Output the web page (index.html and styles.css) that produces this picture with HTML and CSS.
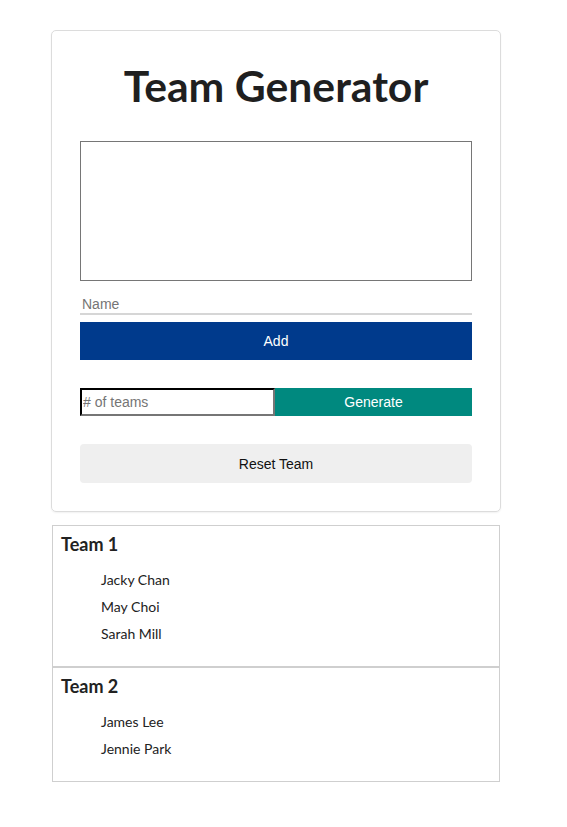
FILE: index.html
```html
<!DOCTYPE html>
<html>
<head>
<meta charset="utf-8">
<link rel="stylesheet" href="styles.css">
</head>
<body>
<div class="wrap">
  <div class="card">
    <h1 class="title">Team Generator</h1>
    <textarea class="names"></textarea>
    <input class="name-input" type="text" placeholder="Name">
    <button class="btn btn-add">Add</button>
    <div class="gen-row">
      <input class="num-input" type="text" placeholder="# of teams">
      <button class="btn btn-gen">Generate</button>
    </div>
    <button class="btn btn-reset">Reset Team</button>
  </div>
  <div class="teams">
    <div class="team">
      <h3 class="team-title">Team 1</h3>
      <ul class="members">
        <li>Jacky Chan</li>
        <li>May Choi</li>
        <li>Sarah Mill</li>
      </ul>
    </div>
    <div class="team">
      <h3 class="team-title">Team 2</h3>
      <ul class="members">
        <li>James Lee</li>
        <li>Jennie Park</li>
      </ul>
    </div>
  </div>
</div>
</body>
</html>
```
FILE: styles.css
```css
html, body {
  margin: 0;
  padding: 0;
  background: #fff;
}
body {
  font-family: Lato, "Liberation Sans", sans-serif;
  color: #222;
}
.wrap {
  width: 450px;
  margin-left: 51px;
  padding-top: 30px;
}
.card {
  border: 1px solid #dcdcdc;
  border-radius: 5px;
  box-shadow: 0 1px 2px rgba(0,0,0,0.06);
  padding: 28px 28px 28px 28px;
  display: flex;
  flex-direction: column;
}
.title {
  margin: 0 0 28px 0;
  font-size: 42.7px;
  font-weight: 700;
  text-align: center;
  color: #1f1f1f;
  line-height: 54px;
}
.names {
  display: block;
  box-sizing: border-box;
  width: 100%;
  height: 140px;
  margin: 0;
  border: 1px solid #767676;
  resize: none;
}
.name-input {
  display: block;
  box-sizing: border-box;
  width: 100%;
  height: 21px;
  margin: 13px 0 0 0;
  padding: 0 2px;
  border: 0;
  border-bottom: 2px solid #d6d6d6;
  font-family: "Liberation Sans", Arial, sans-serif;
  font-size: 14px;
  outline: none;
}
.name-input::placeholder, .num-input::placeholder {
  color: #757575;
  font-family: "Liberation Sans", Arial, sans-serif;
  font-size: 14px;
}
.btn {
  display: block;
  border: 0;
  margin: 0;
  font-family: "Liberation Sans", Arial, sans-serif;
  font-size: 14px;
  cursor: pointer;
}
.btn-add {
  margin-top: 7px;
  height: 38px;
  width: 100%;
  background: #003a8c;
  color: #fff;
}
.gen-row {
  display: flex;
  margin-top: 28px;
  height: 28px;
}
.num-input {
  flex: 0 0 195px;
  box-sizing: border-box;
  width: 195px;
  height: 28px;
  margin: 0;
  padding: 1px 1px;
  border: 2px inset #767676;
  border-top-color: #222;
  border-left-color: #222;
  font-family: "Liberation Sans", Arial, sans-serif;
  font-size: 14px;
}
.btn-gen {
  flex: 1 1 0;
  min-width: 0;
  height: 28px;
  background: #00897f;
  color: #fff;
}
.btn-reset {
  margin-top: 28px;
  height: 39px;
  width: 100%;
  background: #efefef;
  color: #111;
  border-radius: 4px;
}
.teams {
  margin-top: 13px;
  margin-left: 1px;
  width: 448px;
}
.team {
  border: 1px solid #cfcfcf;
  padding: 6px 8px 19px 8px;
}
.team-title {
  margin: 0;
  font-size: 18px;
  line-height: 24px;
  font-weight: 700;
  color: #222;
}
.members {
  margin: 10px 0 0 0;
  padding-left: 40px;
  list-style: none;
}
.members li {
  font-size: 14px;
  line-height: 27px;
  color: #222;
}
```
